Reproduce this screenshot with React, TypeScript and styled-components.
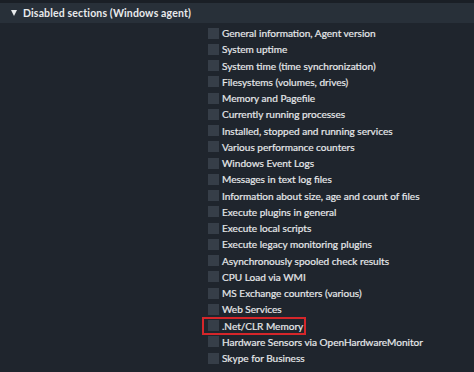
import React from "react";
import styled, { createGlobalStyle } from "styled-components";

const Global = createGlobalStyle`
  html, body { margin: 0; padding: 0; background: #1f252d; }
  body { font-family: Lato, "Open Sans", sans-serif; }
`;

const Page = styled.div`
  width: 474px;
  height: 372px;
  overflow: hidden;
  background: #1f252d;
`;

const TopStrip = styled.div`
  height: 3px;
  background: #1a1f26;
`;

const Header = styled.div`
  height: 20px;
  background: #283039;
  display: flex;
  align-items: center;
  gap: 6px;
  padding-left: 11px;
  color: #e8eaec;
  font-weight: 700;
  font-size: 10.5px;
  letter-spacing: 0.15px;
`;

const Triangle = styled.span`
  width: 0;
  height: 0;
  border-left: 3.5px solid transparent;
  border-right: 3.5px solid transparent;
  border-top: 6px solid #e8eaec;
`;

const List = styled.div`
  display: flex;
  flex-direction: column;
  padding-left: 208px;
  padding-top: 2px;
`;

const Row = styled.div`
  display: flex;
  align-items: center;
  gap: 3px;
  height: 16.25px;
  font-size: 10.05px;
  color: #e6e8ea;
  -webkit-text-stroke: 0.2px #e6e8ea;
  position: relative;
`;

const Box = styled.span`
  width: 11px;
  height: 11px;
  background: #363e48;
  flex: none;
`;

const Mark = styled.span`
  position: absolute;
  left: -6px;
  top: -1px;
  width: 104px;
  height: 18px;
  border: 2px solid #d5262a;
  box-sizing: border-box;
`;

const items = [
  "General information, Agent version",
  "System uptime",
  "System time (time synchronization)",
  "Filesystems (volumes, drives)",
  "Memory and Pagefile",
  "Currently running processes",
  "Installed, stopped and running services",
  "Various performance counters",
  "Windows Event Logs",
  "Messages in text log files",
  "Information about size, age and count of files",
  "Execute plugins in general",
  "Execute local scripts",
  "Execute legacy monitoring plugins",
  "Asynchronously spooled check results",
  "CPU Load via WMI",
  "MS Exchange counters (various)",
  "Web Services",
  ".Net/CLR Memory",
  "Hardware Sensors via OpenHardwareMonitor",
  "Skype for Business",
];

export default function App() {
  return (
    <Page>
      <Global />
      <TopStrip />
      <Header>
        <Triangle />
        Disabled sections (Windows agent)
      </Header>
      <List>
        {items.map((t) => (
          <Row key={t}>
            <Box />
            {t}
            {t === ".Net/CLR Memory" && <Mark />}
          </Row>
        ))}
      </List>
    </Page>
  );
}
